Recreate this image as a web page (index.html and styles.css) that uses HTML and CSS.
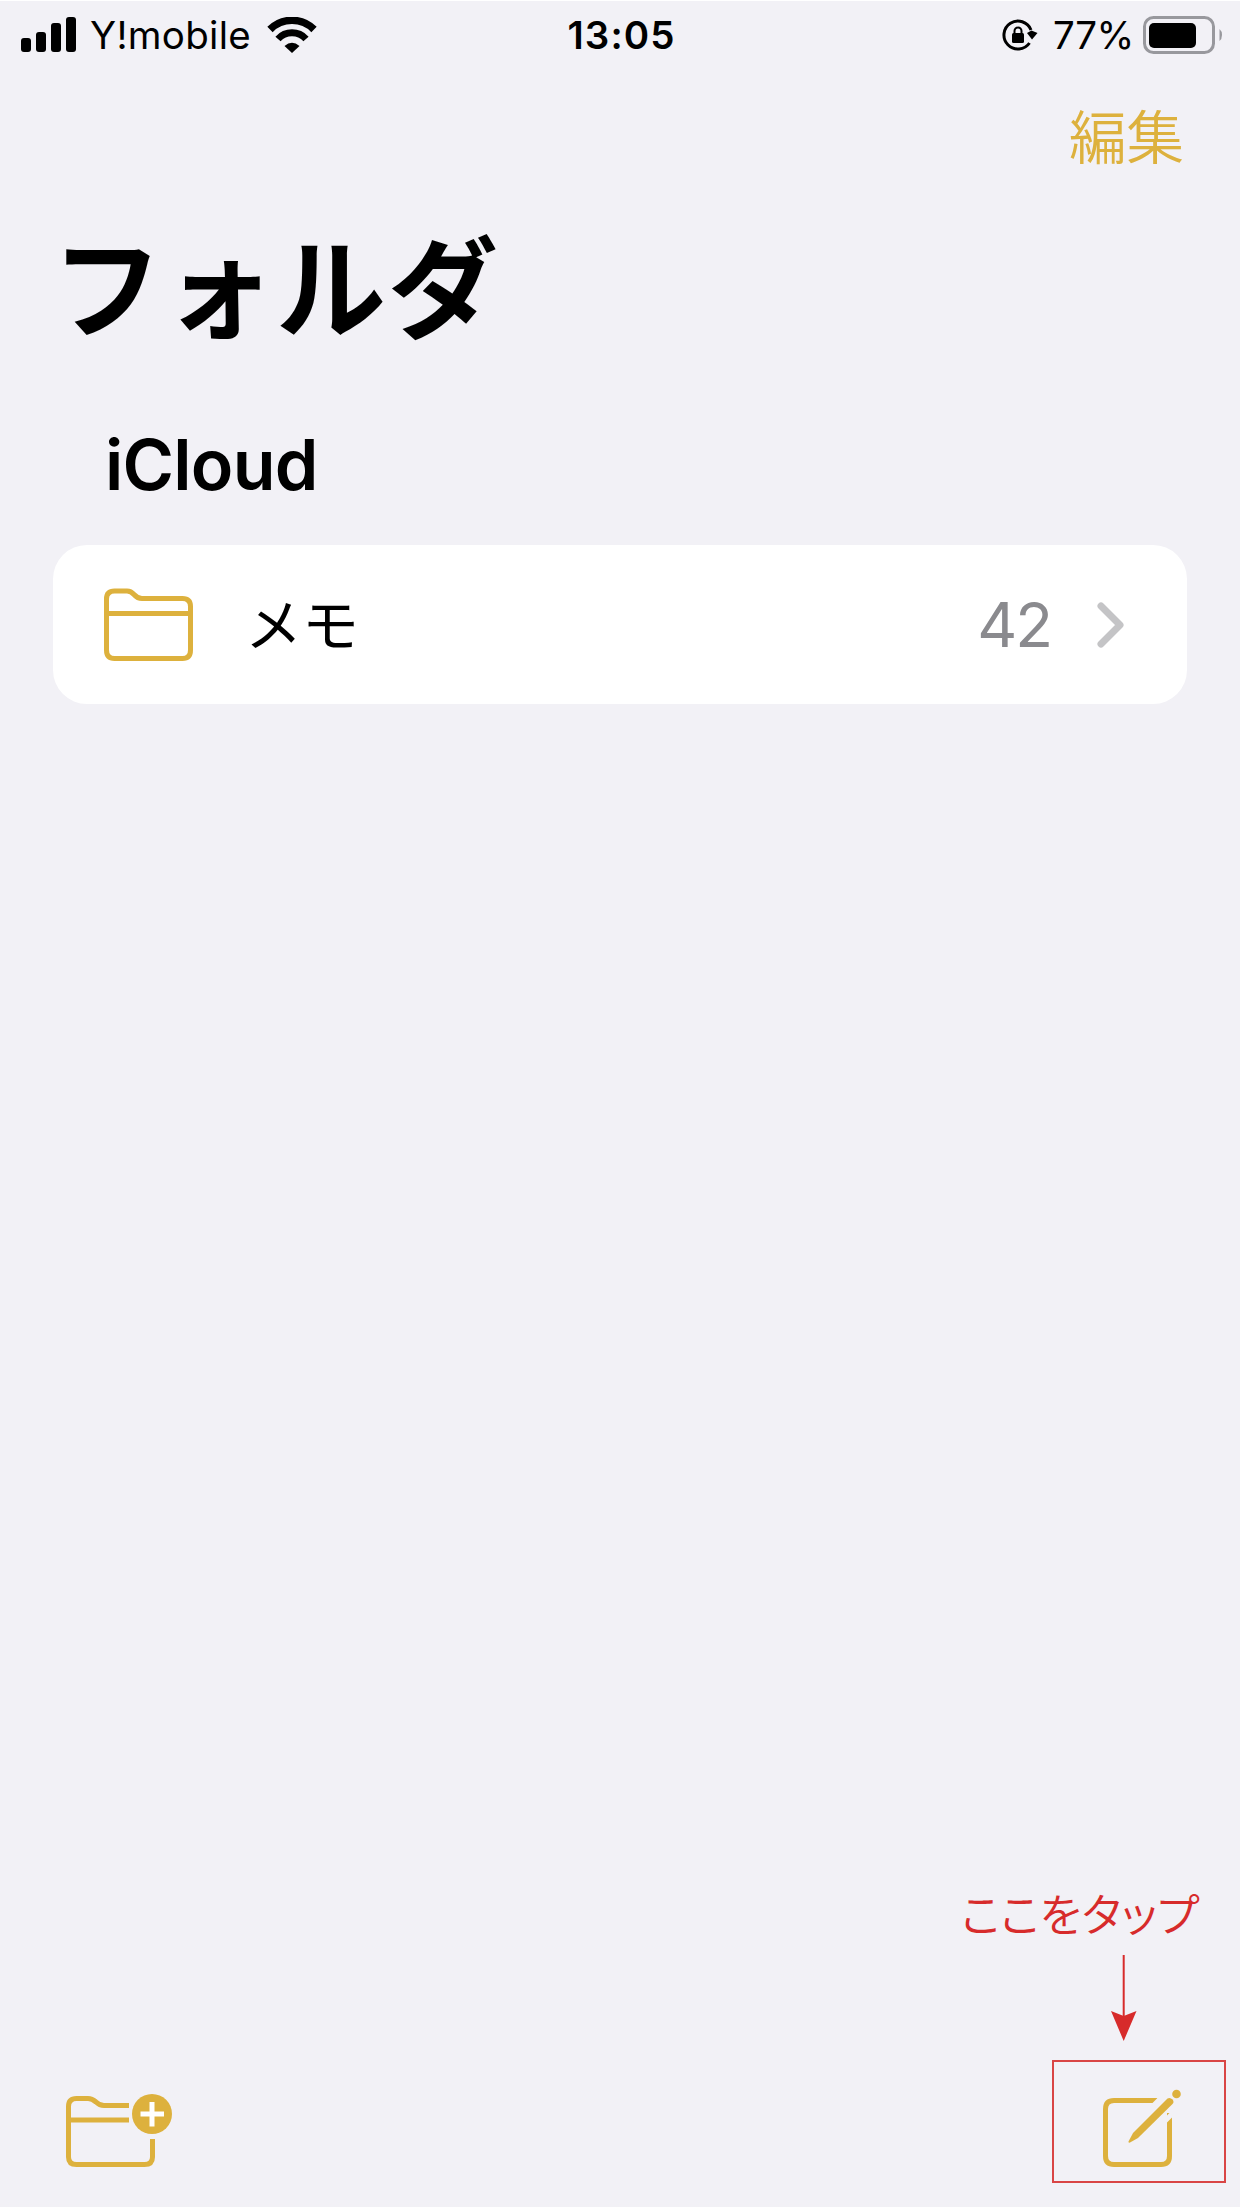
FILE: index.html
```
<!DOCTYPE html>
<html lang="ja">
<head>
    <meta charset="UTF-8">
    <meta name="viewport" content="width=device-width, initial-scale=1.0">
    <title>フォルダ</title>
    <link rel="stylesheet" href="styles.css">
</head>
<body>
    <div class="screen">
        <header class="status-bar">
            <div class="status-left">
                <svg class="signal" width="56" height="36" viewBox="0 0 56 36">
                    <rect x="0" y="21" width="10" height="14" rx="3"/>
                    <rect x="15" y="15" width="10" height="20" rx="3"/>
                    <rect x="30" y="6" width="10" height="29" rx="3"/>
                    <rect x="45" y="0" width="10" height="35" rx="3"/>
                </svg>
                <span class="carrier">Y!mobile</span>
                <svg class="wifi" width="50" height="36" viewBox="0 0 50 36">
                    <path d="M3 12.500 A31 31 0 0 1 47 12.500" fill="none" stroke="#000" stroke-width="7.500"/>
                    <path d="M11 22 A19 19 0 0 1 39 22" fill="none" stroke="#000" stroke-width="7"/>
                    <path d="M17.500 29 Q25 22.500 32.500 29 L25 36 Z"/>
                </svg>
            </div>
            <span class="clock">13:05</span>
            <div class="status-right">
                <svg class="rotation-lock" width="36" height="34" viewBox="0 0 36 34">
                    <path d="M27.500 25 A14 14 0 1 1 29 12" fill="none" stroke="#000" stroke-width="3"/>
                    <path d="M25 15 L29.500 12.500 L35.500 15 L30 21.500 Z"/>
                    <rect x="10" y="15" width="12" height="10" rx="1.500"/>
                    <path d="M12.500 17 V13 a3.500 3.500 0 0 1 7 0 V17" fill="none" stroke="#000" stroke-width="2"/>
                </svg>
                <span class="percent">77%</span>
                <svg class="battery" width="80" height="38" viewBox="0 0 80 38">
                    <rect x="1.500" y="1.500" width="69" height="35" rx="9" fill="none" stroke="#98989d" stroke-width="3"/>
                    <rect x="6" y="7" width="47" height="25" rx="5"/>
                    <path d="M76.500 13 Q79 15 79 19 T76.500 25 Z" fill="#98989d"/>
                </svg>
            </div>
        </header>

        <nav class="nav-bar">
            <a class="edit">編集</a>
        </nav>

        <h1>フォルダ</h1>
        <h2>iCloud</h2>

        <div class="folder-row">
            <svg class="icon" width="89" height="74" viewBox="0 0 89 74">
                <path d="M2.500 62 V11 Q2.500 3 10.500 3 H23 Q27 3 30 6.500 Q33.500 10.500 38 10.500 H78.500 Q86.500 10.500 86.500 18.500 V62 Q86.500 70.500 78.500 70.500 H10.500 Q2.500 70.500 2.500 62 Z"/>
                <path d="M2.500 25.500 H86.500"/>
            </svg>
            <span class="folder-name">メモ</span>
            <span class="count">42</span>
            <svg class="chevron" width="28" height="46" viewBox="0 0 28 46">
                <path d="M4 4 L23 23 L4 42"/>
            </svg>
        </div>

        <footer class="toolbar">
            <svg class="icon new-folder" width="108" height="76" viewBox="0 0 108 76">
                <path d="M63 11.500 H38 Q33.500 11.500 30 8 Q26 4.500 22 4.500 H10.500 Q2.500 4.500 2.500 12.500 V63 Q2.500 70.500 10.500 70.500 H78.500 Q86.500 70.500 86.500 63 V45"/>
                <path d="M2.500 26 H63"/>
                <circle class="badge" cx="86" cy="20" r="20"/>
                <path class="plus" d="M74.500 20 H98 M86 8 V32.500"/>
            </svg>
            <div class="tap-area">
                <p class="hint">ここをタップ</p>
                <svg class="arrow" width="26" height="88" viewBox="0 0 26 88">
                    <path d="M12.700 0 V64" fill="none" stroke="#d72b2b" stroke-width="2"/>
                    <path d="M0 56 L12.700 61 L25.500 56 L12.700 86 Z" fill="#d72b2b"/>
                </svg>
                <div class="tap-box">
                    <svg class="icon compose" width="79" height="79" viewBox="0 0 79 79">
                        <path d="M54.500 11.500 H11 Q2.500 11.500 2.500 20 V67 Q2.500 75.500 11 75.500 H58 Q66.500 75.500 66.500 67 V24"/>
                        <path class="gap" d="M44 23 L60 7 M58 36 L74 20"/>
                        <path class="fill" d="M25.500 52.500 L30 44 L64.500 9.500 Q67 8 69.500 10.500 Q71.500 13 69.500 15 L35 49 L27 53.500 Q25 54 25.500 52.500 Z"/>
                        <circle class="fill" cx="73.500" cy="5" r="4.300"/>
                    </svg>
                </div>
            </div>
        </footer>
    </div>
</body>
</html>
```
FILE: styles.css
```
* {
    box-sizing: border-box;
}
body {
    margin: 0;
    background-color: #fff;
    font-family: Inter, "Noto Sans CJK JP", sans-serif;
    color: #000;
}
svg {
    display: block;
    flex: none;
}
h1, h2, p {
    margin: 0;
}
.screen {
    display: flex;
    flex-direction: column;
    width: 1240px;
    height: 2206px;
    margin-top: 1px;
    background-color: #f2f1f6;
}
.status-bar {
    display: grid;
    grid-template-columns: 1fr auto 1fr;
    align-items: center;
    height: 68px;
    padding: 0 17px 0 21px;
    font-size: 38.5px;
    line-height: 68px;
}
.status-left, .status-right {
    display: flex;
    align-items: center;
}
.status-right {
    justify-content: flex-end;
}
.carrier {
    margin-left: 13px;
    letter-spacing: 0.3px;
}
.wifi {
    margin-left: 16px;
}
.clock {
    margin-right: 1px;
    font-weight: 600;
    letter-spacing: 1.1px;
}
.percent {
    margin: 0 9px 0 15px;
    letter-spacing: -0.4px;
}
.nav-bar {
    display: flex;
    justify-content: flex-end;
    height: 128px;
    padding: 23px 56px 0 0;
}
.edit {
    font-family: "Noto Sans CJK JP", sans-serif;
    font-size: 57.5px;
    font-weight: 350;
    line-height: 84px;
    color: #ddb13d;
}
h1 {
    height: 170px;
    padding-left: 52px;
    font-family: "Noto Sans CJK JP", sans-serif;
    font-size: 110px;
    font-weight: 700;
    line-height: 170px;
    letter-spacing: 2px;
}
h2 {
    height: 178px;
    padding-left: 105px;
    font-size: 70px;
    font-weight: 600;
    line-height: 196px;
    letter-spacing: -0.8px;
}
.folder-row {
    display: flex;
    align-items: center;
    height: 159px;
    margin: 0 53px;
    padding: 0 62px 0 51px;
    border-radius: 34px;
    background-color: #fff;
}
.icon {
    fill: none;
    stroke: #ddb13d;
    stroke-width: 5;
}
.folder-name {
    flex: 1;
    margin: -8px 0 0 52px;
    font-family: "Noto Sans CJK JP", sans-serif;
    font-size: 57px;
    font-weight: 400;
    line-height: 84px;
}
.count {
    margin-right: 46px;
    font-size: 62px;
    color: #8a8a8e;
    letter-spacing: -2px;
}
.chevron {
    fill: none;
    stroke: #c4c4c6;
    stroke-width: 7;
    stroke-linecap: round;
    stroke-linejoin: round;
}
.toolbar {
    display: flex;
    justify-content: space-between;
    align-items: flex-end;
    margin-top: auto;
    padding: 0 14px 24px 66px;
}
.new-folder {
    margin-bottom: 13px;
}
.badge {
    fill: #ddb13d;
    stroke: none;
}
.plus {
    stroke: #fff;
}
.tap-area {
    display: flex;
    flex-direction: column;
    align-items: flex-end;
}
.hint {
    margin-right: 27px;
    font-family: "Noto Sans CJK JP", sans-serif;
    font-size: 45.5px;
    font-weight: 350;
    line-height: 64px;
    font-feature-settings: "palt";
    color: #d72b2b;
}
.arrow {
    margin: 11px 89px 17px 0;
}
.tap-box {
    width: 174px;
    height: 123px;
    padding: 27px 0 0 49px;
    border: 2px solid #d94545;
}
.fill {
    fill: #ddb13d;
    stroke: none;
}
.gap {
    stroke: #f2f1f6;
}
```
